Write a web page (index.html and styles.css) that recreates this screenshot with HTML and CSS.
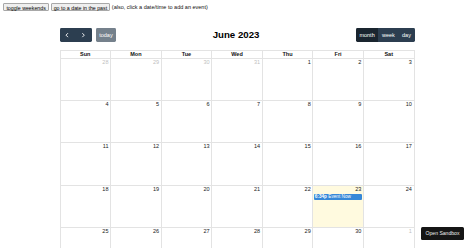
FILE: index.html
```html
<!DOCTYPE html>
<html>
<head>
<meta charset="utf-8">
<link rel="stylesheet" href="styles.css">
</head>
<body>
<div class="top"><button class="tbtn">toggle weekends</button> <button class="tbtn">go to a date in the past</button> (also, click a date/time to add an event)</div>
<div class="cal">
  <div class="toolbar">
    <div class="chunk">
      <div class="group">
        <button class="fbtn icon"><svg viewBox="0 0 10 10"><polyline points="6,2.6 3.6,5 6,7.4"/></svg></button><button class="fbtn icon"><svg viewBox="0 0 10 10"><polyline points="4,2.6 6.4,5 4,7.4"/></svg></button>
      </div>
      <button class="fbtn today">today</button>
    </div>
    <h2 class="title">June 2023</h2>
    <div class="group">
      <button class="fbtn active">month</button><button class="fbtn">week</button><button class="fbtn">day</button>
    </div>
  </div>
  <div class="grid">
    <div class="hd">Sun</div><div class="hd">Mon</div><div class="hd">Tue</div><div class="hd">Wed</div><div class="hd">Thu</div><div class="hd">Fri</div><div class="hd">Sat</div>

    <div class="day other"><span class="num">28</span></div>
    <div class="day other"><span class="num">29</span></div>
    <div class="day other"><span class="num">30</span></div>
    <div class="day other"><span class="num">31</span></div>
    <div class="day"><span class="num">1</span></div>
    <div class="day"><span class="num">2</span></div>
    <div class="day"><span class="num">3</span></div>

    <div class="day"><span class="num">4</span></div>
    <div class="day"><span class="num">5</span></div>
    <div class="day"><span class="num">6</span></div>
    <div class="day"><span class="num">7</span></div>
    <div class="day"><span class="num">8</span></div>
    <div class="day"><span class="num">9</span></div>
    <div class="day"><span class="num">10</span></div>

    <div class="day"><span class="num">11</span></div>
    <div class="day"><span class="num">12</span></div>
    <div class="day"><span class="num">13</span></div>
    <div class="day"><span class="num">14</span></div>
    <div class="day"><span class="num">15</span></div>
    <div class="day"><span class="num">16</span></div>
    <div class="day"><span class="num">17</span></div>

    <div class="day"><span class="num">18</span></div>
    <div class="day"><span class="num">19</span></div>
    <div class="day"><span class="num">20</span></div>
    <div class="day"><span class="num">21</span></div>
    <div class="day"><span class="num">22</span></div>
    <div class="day today-cell"><span class="num">23</span><div class="event"><b>6:34p</b> Event Now</div></div>
    <div class="day"><span class="num">24</span></div>

    <div class="day"><span class="num">25</span></div>
    <div class="day"><span class="num">26</span></div>
    <div class="day"><span class="num">27</span></div>
    <div class="day"><span class="num">28</span></div>
    <div class="day"><span class="num">29</span></div>
    <div class="day"><span class="num">30</span></div>
    <div class="day other"><span class="num">1</span></div>
  </div>
</div>
<a class="sandbox">Open Sandbox</a>
</body>
</html>
```
FILE: styles.css
```css
html, body {
  overflow: hidden;
}
body {
  margin: 3.2px;
  font-family: "Liberation Sans", Arial, sans-serif;
  font-size: 5.52px;
  color: #111;
  background: #fff;
}
.top {
  height: 8px;
  line-height: 8px;
  margin-bottom: 16.8px;
  white-space: nowrap;
}
.tbtn {
  font-family: "Liberation Sans", Arial, sans-serif;
  font-size: 5.26px;
  line-height: 6px;
  padding: 0.4px 2.2px;
  margin: 0;
  border: 1px solid #a8a8a8;
  border-radius: 1px;
  background: #efefef;
  color: #000;
  vertical-align: top;
  height: 8px;
}
.cal {
  width: 355px;
  margin: 0 auto;
}
.toolbar {
  display: flex;
  justify-content: space-between;
  align-items: center;
  margin-bottom: 8.3px;
}
.chunk {
  display: flex;
  align-items: center;
}
.group {
  display: flex;
}
.fbtn {
  font-family: "Liberation Sans", Arial, sans-serif;
  font-size: 5.52px;
  line-height: 8.28px;
  height: 13.7px;
  padding: 0 3.6px;
  margin: 0;
  border: 0;
  background: #2c3e50;
  color: #fff;
  border-radius: 0;
}
.group .fbtn:first-child {
  border-radius: 1.4px 0 0 1.4px;
}
.group .fbtn:last-child {
  border-radius: 0 1.4px 1.4px 0;
}
.fbtn.active {
  background: #1a252f;
}
.fbtn.icon {
  width: 16px;
  padding: 0;
  display: flex;
  align-items: center;
  justify-content: center;
}
.fbtn.icon svg {
  width: 8.3px;
  height: 8.3px;
  fill: none;
  stroke: #fff;
  stroke-width: 1.1;
}
.fbtn.today {
  margin-left: 4.1px;
  border-radius: 1.4px;
  opacity: 0.65;
}
.title {
  margin: 0;
  font-size: 9.66px;
  font-weight: bold;
  color: #000;
}
.grid {
  display: grid;
  grid-template-columns: repeat(7, 1fr);
  grid-template-rows: 7.8px repeat(5, 42.3px);
  border-top: 1px solid #e3e3e3;
  border-left: 1px solid #e3e3e3;
}
.hd, .day {
  border-right: 1px solid #e3e3e3;
  border-bottom: 1px solid #e3e3e3;
  box-sizing: border-box;
  min-width: 0;
}
.hd {
  text-align: center;
  font-weight: bold;
  line-height: 6.8px;
  color: #111;
}
.day {
  display: flex;
  flex-direction: column;
}
.num {
  display: block;
  text-align: right;
  padding: 1px 1.6px 0;
  line-height: 5.52px;
  color: #222;
}
.other .num {
  opacity: 0.3;
}
.today-cell {
  background: rgba(255, 220, 40, 0.15);
}
.event {
  margin: 2px 0.8px 0;
  padding: 0 0.6px;
  height: 6px;
  line-height: 6px;
  font-size: 4.7px;
  background: #3788d8;
  color: #fff;
  border-radius: 1px;
  white-space: nowrap;
  overflow: hidden;
}
.sandbox {
  position: fixed;
  right: 9.7px;
  bottom: 8.3px;
  width: 43.6px;
  height: 12.4px;
  line-height: 12.4px;
  text-align: center;
  font-size: 5.1px;
  background: #151515;
  color: #f0f0f0;
  border-radius: 1.5px;
}
```
